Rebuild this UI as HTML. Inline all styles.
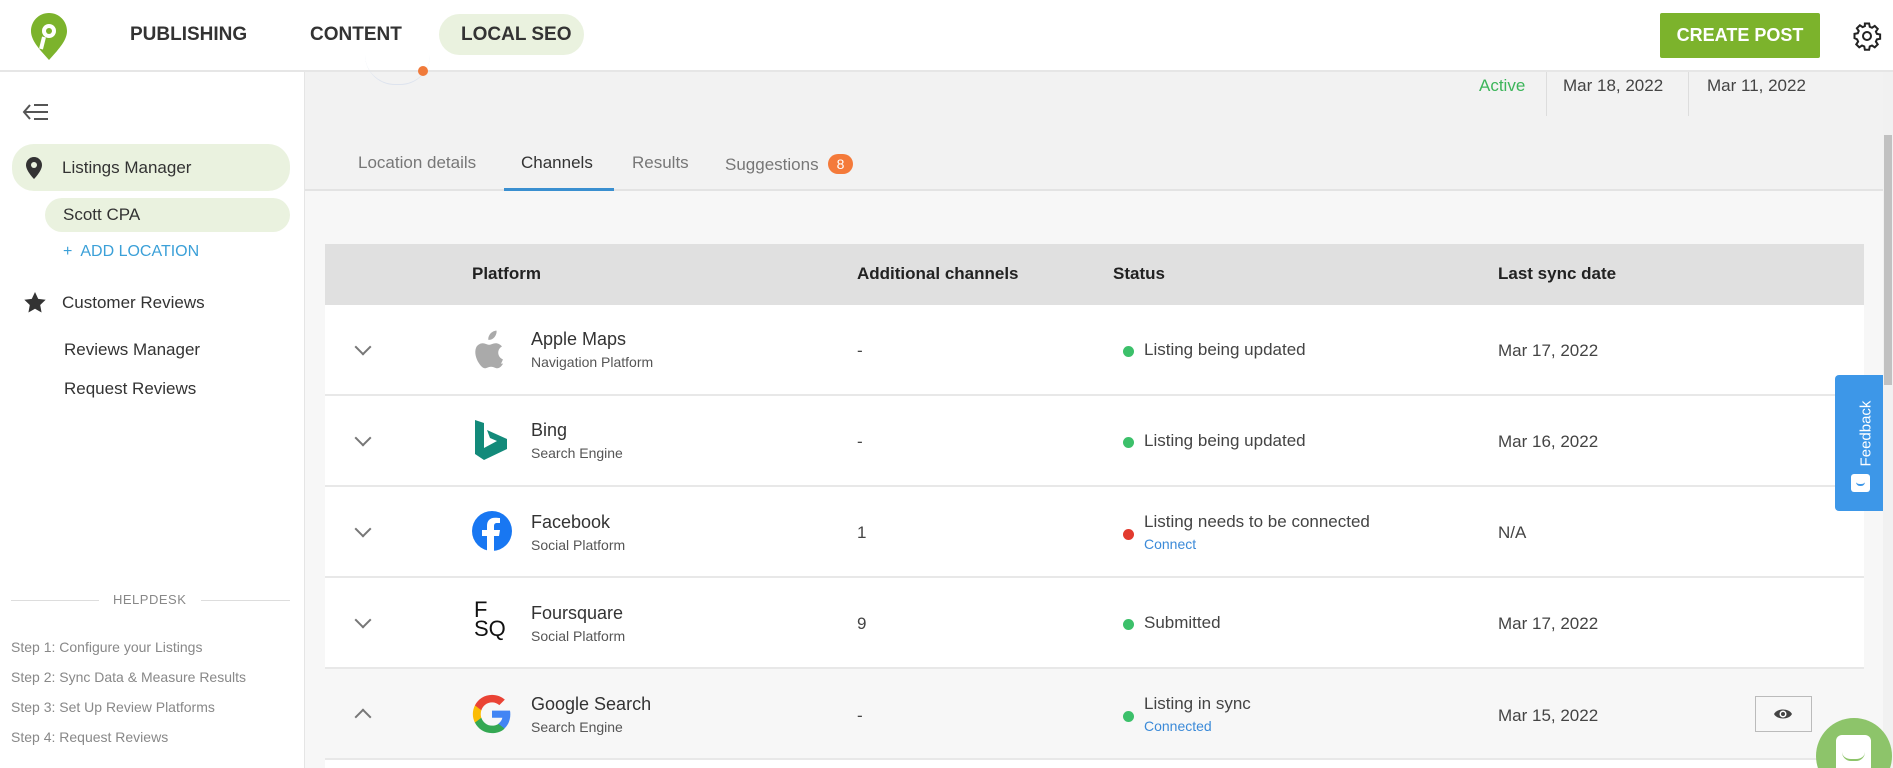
<!DOCTYPE html>
<html style="width:1893px;height:768px;overflow:hidden"><head><meta charset="utf-8"><style>
*{margin:0;padding:0;box-sizing:border-box}
body{width:1893px;height:768px;overflow:hidden;background:#f2f2f2;font-family:"Liberation Sans",sans-serif;color:#333;position:relative}
.a{position:absolute;white-space:nowrap}
.hdr{position:absolute;left:0;top:0;width:1893px;height:72px;background:#fff;border-bottom:2px solid #e6e6e6}
.nav{font-weight:bold;font-size:19px;color:#333;top:24px}
.side{position:absolute;left:0;top:72px;width:305px;height:696px;background:#fff;border-right:1px solid #e5e5e5}
.pill{position:absolute;background:#eaf2df;border-radius:22px}
.s15{font-size:17px;color:#333}
.step{font-size:14px;color:#888;left:11px}
.th{font-weight:bold;font-size:17px;color:#222;top:264px}
.row{position:absolute;left:325px;width:1539px;height:91px;background:#fff;border-bottom:2px solid #e8e8e8}
.nm{font-size:18px;color:#333}
.sub{font-size:14px;color:#555}
.cell{font-size:17px;color:#444}
.dot{position:absolute;width:11px;height:11px;border-radius:50%;background:#3cc06a}
.lnk{font-size:14px;color:#3b8ad8}
.chev{position:absolute;left:357px;width:12px;height:12px;border-right:2px solid #777;border-bottom:2px solid #777;transform:rotate(45deg)}
</style></head><body>
<div class="hdr"></div>
<svg class="a" style="left:30px;top:12px" width="38" height="48" viewBox="0 0 38 48"><path d="M19 1C9 1 1 9 1 19c0 8 6 15 10 20l8 9 8-9c4-5 10-12 10-20C37 9 29 1 19 1z" fill="#7cb32c"/><circle cx="19" cy="19" r="7" fill="#fff"/><circle cx="19" cy="19" r="3" fill="#7cb32c"/><path d="M14 25l-3 12" stroke="#fff" stroke-width="4"/></svg>
<div class="a nav" style="left:130px">PUBLISHING</div>
<div class="a nav" style="left:310px">CONTENT</div>
<div class="pill" style="left:439px;top:14px;width:145px;height:41px;border-radius:21px"></div>
<div class="a nav" style="left:461px">LOCAL SEO</div>
<div class="a" style="left:1660px;top:13px;width:160px;height:45px;background:#7cb32c;border-radius:2px;color:#fff;font-weight:bold;font-size:18px;text-align:center;line-height:45px">CREATE POST</div>
<svg class="a" style="left:1852px;top:21px" width="30" height="30" viewBox="0 0 24 24" fill="none" stroke="#222" stroke-width="1.6"><circle cx="12" cy="12" r="3.2"/><path d="M10.3 2h3.4l.5 2.6 1.8.8 2.2-1.5 2.4 2.4-1.5 2.2.8 1.8 2.6.5v3.4l-2.6.5-.8 1.8 1.5 2.2-2.4 2.4-2.2-1.5-1.8.8-.5 2.6h-3.4l-.5-2.6-1.8-.8-2.2 1.5-2.4-2.4 1.5-2.2-.8-1.8L2 13.7v-3.4l2.6-.5.8-1.8-1.5-2.2 2.4-2.4 2.2 1.5 1.8-.8z"/></svg>

<div class="side"></div>
<svg class="a" style="left:22px;top:103px" width="28" height="18" viewBox="0 0 28 18" stroke="#555" stroke-width="2" fill="none"><path d="M8 2L2 9l6 7M2 9h24M12 2h14M12 16h14"/></svg>
<div class="pill" style="left:12px;top:144px;width:278px;height:47px"></div>
<svg class="a" style="left:26px;top:157px" width="16" height="22" viewBox="0 0 16 22"><path d="M8 0C3.6 0 0 3.6 0 8c0 6 8 14 8 14s8-8 8-14c0-4.4-3.6-8-8-8z" fill="#333"/><circle cx="8" cy="8" r="3" fill="#eaf2df"/></svg>
<div class="a s15" style="left:62px;top:158px">Listings Manager</div>
<div class="pill" style="left:45px;top:198px;width:245px;height:34px;border-radius:17px"></div>
<div class="a s15" style="left:63px;top:205px">Scott CPA</div>
<div class="a" style="left:63px;top:243px;font-size:16px;color:#3ba0d8">+&nbsp; ADD LOCATION</div>
<svg class="a" style="left:24px;top:292px" width="22" height="21" viewBox="0 0 24 23"><path d="M12 0l3.5 7.5 8.2 1-6 5.7 1.5 8.2L12 18.4 4.8 22.4l1.5-8.2-6-5.7 8.2-1z" fill="#333"/></svg>
<div class="a s15" style="left:62px;top:293px">Customer Reviews</div>
<div class="a s15" style="left:64px;top:340px">Reviews Manager</div>
<div class="a s15" style="left:64px;top:379px">Request Reviews</div>
<div class="a" style="left:11px;top:600px;width:88px;height:1px;background:#ddd"></div>
<div class="a" style="left:113px;top:592px;font-size:13px;color:#888;letter-spacing:.5px">HELPDESK</div>
<div class="a" style="left:201px;top:600px;width:89px;height:1px;background:#ddd"></div>
<div class="a step" style="top:639px">Step 1: Configure your Listings</div>
<div class="a step" style="top:669px">Step 2: Sync Data &amp; Measure Results</div>
<div class="a step" style="top:699px">Step 3: Set Up Review Platforms</div>
<div class="a step" style="top:729px">Step 4: Request Reviews</div>

<div class="a" style="left:365px;top:55px;width:65px;height:30px;border-radius:0 0 40px 40px;border-bottom:1px solid #dde3ee"></div>
<div class="a" style="left:418px;top:66px;width:10px;height:10px;border-radius:50%;background:#f07a3a"></div>
<div class="a" style="left:1479px;top:76px;font-size:17px;color:#3cb55a">Active</div>
<div class="a" style="left:1546px;top:72px;width:1px;height:44px;background:#ddd"></div>
<div class="a" style="left:1563px;top:76px;font-size:17px;color:#444">Mar 18, 2022</div>
<div class="a" style="left:1688px;top:72px;width:1px;height:44px;background:#ddd"></div>
<div class="a" style="left:1707px;top:76px;font-size:17px;color:#444">Mar 11, 2022</div>

<div class="a" style="left:305px;top:189px;width:1578px;height:579px;background:#f7f7f7;border-top:2px solid #e3e3e3"></div>
<div class="a" style="left:358px;top:153px;font-size:17px;color:#777">Location details</div>
<div class="a" style="left:521px;top:153px;font-size:17px;color:#333">Channels</div>
<div class="a" style="left:504px;top:188px;width:110px;height:3px;background:#3a8fd0"></div>
<div class="a" style="left:632px;top:153px;font-size:17px;color:#777">Results</div>
<div class="a" style="left:725px;top:155px;font-size:17px;color:#777">Suggestions</div>
<div class="a" style="left:828px;top:154px;width:25px;height:20px;border-radius:10px;background:#f47a3a;color:#fff;font-size:14px;text-align:center;line-height:20px">8</div>

<div class="a" style="left:325px;top:244px;width:1539px;height:61px;background:#e0e0e0"></div>
<div class="a th" style="left:472px">Platform</div>
<div class="a th" style="left:857px">Additional channels</div>
<div class="a th" style="left:1113px">Status</div>
<div class="a th" style="left:1498px">Last sync date</div>

<div class="row" style="top:305px"></div>
<div class="row" style="top:396px"></div>
<div class="row" style="top:487px"></div>
<div class="row" style="top:578px"></div>
<div class="row" style="top:669px;background:#f7f7f7"></div>
<div class="a" style="left:325px;top:760px;width:1539px;height:8px;background:#fff"></div>

<div class="chev" style="top:341px"></div>
<div class="chev" style="top:432px"></div>
<div class="chev" style="top:523px"></div>
<div class="chev" style="top:614px"></div>
<div class="chev" style="top:711px;transform:rotate(225deg)"></div>

<svg class="a" style="left:474px;top:330px" width="33" height="40" viewBox="0 0 170 200"><path fill="#aaa" d="M150 170c-8 12-17 24-30 24s-17-8-32-8-20 8-32 8-22-13-30-25C10 145 0 110 12 85c7-12 20-20 33-20s21 8 33 8 19-8 34-8c12 0 24 6 32 17-28 15-24 55 5 66-3 9-7 16-10 22zM116 0c2 13-4 26-11 34-8 9-19 15-31 14-2-12 4-25 11-33 8-9 21-15 31-15z"/></svg>
<svg class="a" style="left:475px;top:420px" width="32" height="40" viewBox="0 0 32 40"><path fill="#138a7a" d="M0 0l9 3v25l13-7-7-3-3-8 20 9v10L9 40 0 34z"/></svg>
<svg class="a" style="left:472px;top:511px" width="40" height="40" viewBox="0 0 40 40"><circle cx="20" cy="20" r="20" fill="#1877f2"/><path fill="#fff" d="M22 40V25h5l1-6h-6v-4c0-2 1-3 3-3h3V7c-1 0-3-.3-5-.3-5 0-8 3-8 8v4.3h-5v6h5v15z"/></svg>
<div class="a" style="left:474px;top:600px;font-size:22px;line-height:19px;color:#111">F<br>SQ</div>
<svg class="a" style="left:472px;top:694px" width="40" height="40" viewBox="0 0 48 48"><path fill="#4285f4" d="M46 24.5c0-1.6-.1-3.1-.4-4.5H24v8.5h12.4c-.5 2.9-2.2 5.3-4.6 6.9v5.7h7.4c4.3-4 6.8-9.9 6.8-16.6z"/><path fill="#34a853" d="M24 47c6.2 0 11.4-2 15.2-5.5l-7.4-5.7c-2 1.4-4.7 2.2-7.8 2.200-6 0-11-4-12.8-9.5H3.5v5.9C7.3 41.9 15 47 24 47z"/><path fill="#fbbc05" d="M11.2 28.5c-.5-1.4-.7-2.9-.7-4.5s.3-3.1.7-4.5v-5.9H3.5C2 16.7 1 20.2 1 24s.9 7.3 2.5 10.4z"/><path fill="#ea4335" d="M24 10c3.4 0 6.4 1.2 8.8 3.4l6.6-6.6C35.4 3.1 30.2 1 24 1 15 1 7.3 6.1 3.5 13.6l7.7 5.9C13 14 18 10 24 10z"/></svg>

<div class="a nm" style="left:531px;top:329px">Apple Maps</div><div class="a sub" style="left:531px;top:354px">Navigation Platform</div>
<div class="a nm" style="left:531px;top:420px">Bing</div><div class="a sub" style="left:531px;top:445px">Search Engine</div>
<div class="a nm" style="left:531px;top:512px">Facebook</div><div class="a sub" style="left:531px;top:537px">Social Platform</div>
<div class="a nm" style="left:531px;top:603px">Foursquare</div><div class="a sub" style="left:531px;top:628px">Social Platform</div>
<div class="a nm" style="left:531px;top:694px">Google Search</div><div class="a sub" style="left:531px;top:719px">Search Engine</div>

<div class="a cell" style="left:857px;top:341px">-</div>
<div class="a cell" style="left:857px;top:432px">-</div>
<div class="a cell" style="left:857px;top:523px">1</div>
<div class="a cell" style="left:857px;top:614px">9</div>
<div class="a cell" style="left:857px;top:706px">-</div>

<div class="dot" style="left:1123px;top:346px"></div><div class="a cell" style="left:1144px;top:340px">Listing being updated</div>
<div class="dot" style="left:1123px;top:437px"></div><div class="a cell" style="left:1144px;top:431px">Listing being updated</div>
<div class="dot" style="left:1123px;top:529px;background:#e23a2e"></div><div class="a cell" style="left:1144px;top:512px">Listing needs to be connected</div><div class="a lnk" style="left:1144px;top:536px">Connect</div>
<div class="dot" style="left:1123px;top:619px"></div><div class="a cell" style="left:1144px;top:613px">Submitted</div>
<div class="dot" style="left:1123px;top:711px"></div><div class="a cell" style="left:1144px;top:694px">Listing in sync</div><div class="a lnk" style="left:1144px;top:718px">Connected</div>

<div class="a cell" style="left:1498px;top:341px">Mar 17, 2022</div>
<div class="a cell" style="left:1498px;top:432px">Mar 16, 2022</div>
<div class="a cell" style="left:1498px;top:523px">N/A</div>
<div class="a cell" style="left:1498px;top:614px">Mar 17, 2022</div>
<div class="a cell" style="left:1498px;top:706px">Mar 15, 2022</div>

<div class="a" style="left:1755px;top:696px;width:57px;height:36px;border:1px solid #bbb;background:#f7f7f7"></div>
<svg class="a" style="left:1773px;top:706px" width="20" height="16" viewBox="0 0 20 16"><path d="M1 8C4 2 16 2 19 8 16 14 4 14 1 8z" fill="#444"/><circle cx="10" cy="8" r="3.5" fill="#fff"/><circle cx="10" cy="8" r="2" fill="#444"/></svg>

<div class="a" style="left:1883px;top:72px;width:10px;height:696px;background:#f1f1f1"></div>
<div class="a" style="left:1884px;top:135px;width:8px;height:250px;background:#c1c1c1"></div>
<div class="a" style="left:1835px;top:375px;width:48px;height:136px;background:#3d97e8;border-radius:4px 0 0 4px"></div>
<div class="a" style="left:1846px;top:425px;color:#fff;font-size:15px;transform:rotate(-90deg);transform-origin:center;width:80px;text-align:center;margin-left:-20px">Feedback</div>
<div class="a" style="left:1851px;top:474px;width:19px;height:18px;background:#fff;border-radius:3px"></div>
<div class="a" style="left:1856px;top:482px;width:9px;height:4px;border-bottom:2px solid #3d97e8;border-radius:0 0 5px 5px"></div>
<div class="a" style="left:1810px;top:712px;width:83px;height:56px;overflow:hidden">
<div class="a" style="left:6px;top:6px;width:76px;height:76px;border-radius:50%;background:#8dc46a"></div>
<div class="a" style="left:26px;top:23px;width:35px;height:40px;background:#fff;border-radius:6px"></div>
<div class="a" style="left:32px;top:40px;width:23px;height:9px;border-bottom:2px solid #8dc46a;border-radius:0 0 12px 12px"></div>
</div>
</body></html>
